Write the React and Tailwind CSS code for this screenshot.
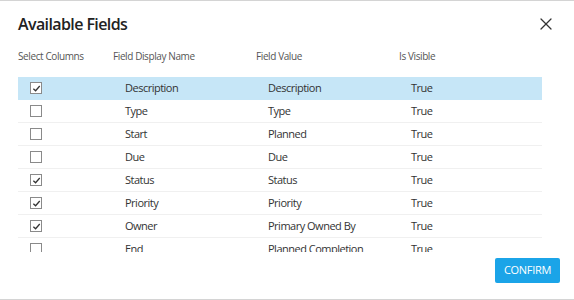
import { X } from 'lucide-react'

const FIELDS = [
	{ name: 'Description', value: 'Description', visible: 'True', checked: true },
	{ name: 'Type',        value: 'Type',        visible: 'True', checked: false },
	{ name: 'Start',       value: 'Planned',     visible: 'True', checked: false },
	{ name: 'Due',         value: 'Due',         visible: 'True', checked: false },
	{ name: 'Status',      value: 'Status',      visible: 'True', checked: true },
	{ name: 'Priority',    value: 'Priority',    visible: 'True', checked: true },
	{ name: 'Owner',       value: 'Primary Owned By', visible: 'True', checked: true },
	{ name: 'End',         value: 'Planned Completion', visible: 'True', checked: false },
]

const Checkbox = ({ checked }) => (
	<span className="w-[12px] h-[12px] border border-[#8a8a8a] bg-white flex items-center justify-center">
		{checked && (
			<svg width="9" height="9" viewBox="0 0 10 10" fill="none">
				<path d="M1.5 5.2 L4 7.5 L8.6 2.2" stroke="#333" strokeWidth="1.4" />
			</svg>
		)}
	</span>
)

const App = () => {
	return (
		<div className="w-[574px] h-[300px] bg-white border-t border-b border-[#d4d4d4] flex flex-col text-[#333333] [font-family:'Open_Sans',sans-serif] overflow-hidden">
			<div className="flex items-center justify-between pl-[18px] pr-[18px] pt-[10px] h-[35px]">
				<h2 className="m-0 text-[16px] font-semibold text-[#222] tracking-[-0.6px]">Available Fields</h2>
				<X size={20} strokeWidth={1.5} className="text-[#333]" />
			</div>

			<div className="flex items-center h-[22px] mt-[9px] mx-[18px] text-[10px] text-[#555] tracking-[-0.4px]">
				<span className="w-[95px]">Select Columns</span>
				<span className="w-[143px]">Field Display Name</span>
				<span className="w-[143px]">Field Value</span>
				<span>Is Visible</span>
			</div>

			<div className="mx-[18px] mt-[10px] w-[524px] h-[175px] overflow-hidden">
				{FIELDS.map((f, idx) => (
					<div
						key={f.name}
						className={`flex items-center h-[23px] text-[11px] tracking-[-0.5px] border-b ${idx === 0 ? 'bg-[#c6e6f7] border-[#c6e6f7]' : 'border-[#f0f0f0]'}`}
					>
						<div className="w-[107px] pl-[12px]"><Checkbox checked={f.checked} /></div>
						<span className="w-[143px]">{f.name}</span>
						<span className="w-[143px]">{f.value}</span>
						<span>{f.visible}</span>
					</div>
				))}
			</div>

			<div className="flex justify-end pr-[14px] mt-[6px]">
				<button className="w-[65px] h-[25px] bg-[#1ba4e8] text-white text-[11px] tracking-[-0.3px] rounded-[2px]">CONFIRM</button>
			</div>
		</div>
	)
}

export default App
